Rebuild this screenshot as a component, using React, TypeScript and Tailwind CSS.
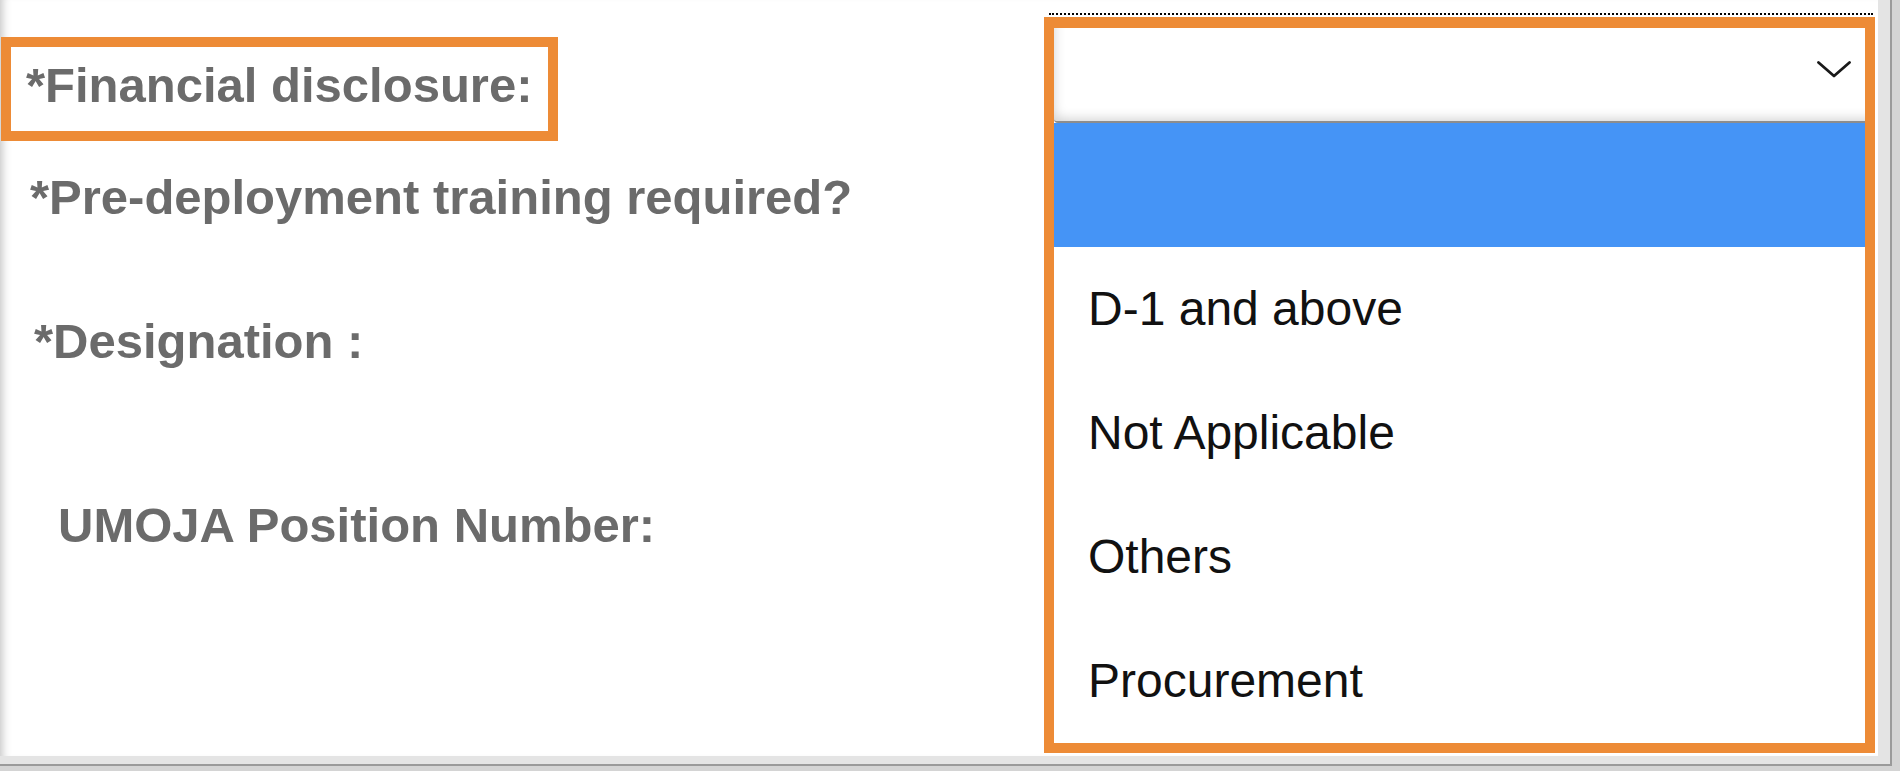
const labelText = "whitespace-nowrap text-[49px] font-bold text-[#6b6b6b]"

const options = ["D-1 and above", "Not Applicable", "Others", "Procurement"]

function Chevron() {
  return (
    <svg width="34" height="17" viewBox="0 0 34 17" fill="none">
      <polyline
        points="1.5,1.5 17,15 32.5,1.5"
        stroke="#1a1a1a"
        strokeWidth="2.8"
        strokeLinecap="round"
        strokeLinejoin="round"
      />
    </svg>
  )
}

export default function App() {
  return (
    <div className="h-[771px] w-[1900px] border-r-[8px] border-b-[5px] border-[#d4d4d4] bg-white font-['Liberation_Sans',Arial,sans-serif]">
      <div className="h-full border-r-2 border-b-2 border-[#9a9a9a]">
        <div className="h-full border-r-[12px] border-b-[8px] border-[#e4e4e4]">
          <div className="flex h-full bg-white shadow-[inset_10px_0_10px_-8px_rgba(0,0,0,0.25)]">
            {/* labels */}
            <div className="flex flex-1 flex-col">
              <div className="ml-[1px] mt-[37px] h-[104px] w-[557px] border-[10px] border-[#ed8b36] bg-white pl-[15px]">
                <p className={`${labelText} leading-[77px]`}>*Financial disclosure:</p>
              </div>
              <p className={`${labelText} mt-[28px] pl-[30px] leading-[56px]`}>
                *Pre-deployment training required?
              </p>
              <p className={`${labelText} mt-[88px] pl-[34px] leading-[56px]`}>
                *Designation :
              </p>
              <p className={`${labelText} mt-[128px] pl-[58px] leading-[56px]`}>
                UMOJA Position Number:
              </p>
            </div>

            {/* open dropdown */}
            <div className="mr-[3px] flex w-[831px] flex-col">
              <div className="ml-[5px] mr-[2px] mt-[13px] border-t-2 border-dotted border-black" />
              <div className="mt-[2px] border-[10px] border-t-[11px] border-[#ed8b36] bg-white">
                <div className="flex h-[95px] justify-end rounded-bl-[4px] border-b-2 border-[#8d8d8d] bg-white pr-[14px] pt-[33px] shadow-[inset_8px_-10px_12px_-8px_rgba(0,0,0,0.18)]">
                  <Chevron />
                </div>
                <div className="h-[124px] bg-[#4594f6]" />
                {options.map((option) => (
                  <div
                    key={option}
                    className="h-[124px] whitespace-nowrap pl-[34px] text-[48px] leading-[124px] text-[#111111]"
                  >
                    {option}
                  </div>
                ))}
              </div>
            </div>
          </div>
        </div>
      </div>
    </div>
  )
}
